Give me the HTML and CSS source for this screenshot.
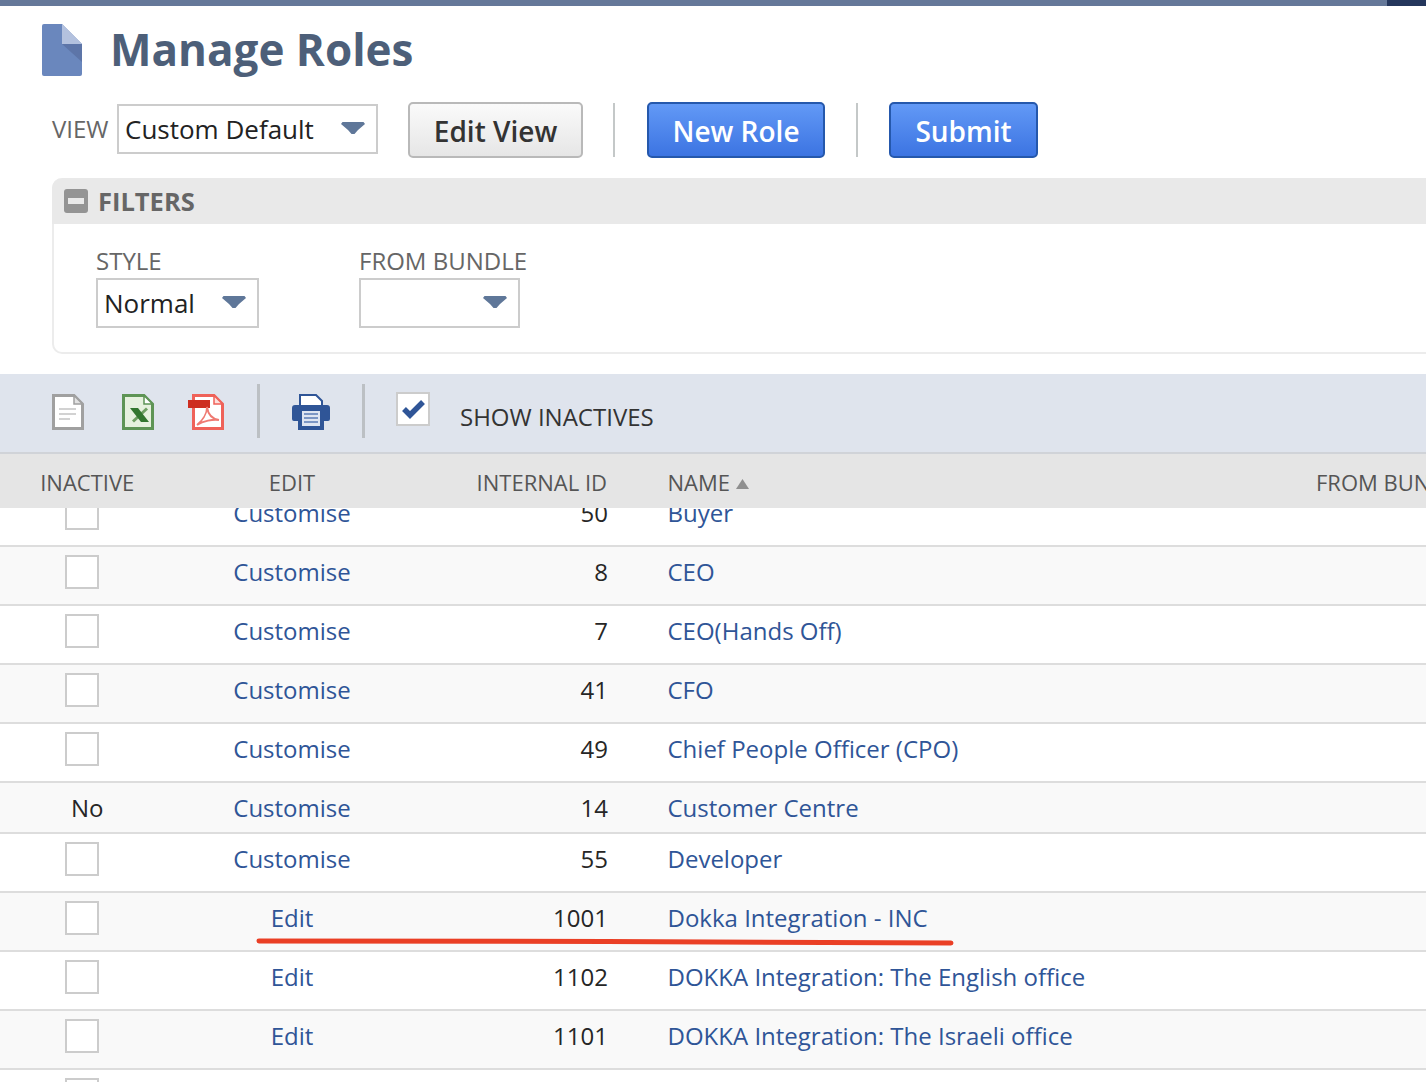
FILE: index.html
```html
<!DOCTYPE html>
<html lang="en">
<head>
<meta charset="utf-8">
<title>Manage Roles</title>
<link rel="stylesheet" href="styles.css">
</head>
<body>
<div class="topbar"><div class="topbar-end"></div></div>
<header class="title-row">
  <svg class="page-icon" width="40" height="52" viewBox="0 0 40 52"><path d="M2 0H20L40 20V50a2 2 0 0 1-2 2H2a2 2 0 0 1-2-2V2a2 2 0 0 1 2-2z" fill="#6a87bd"/><path d="M20 20H40V38z" fill="#5d75a8"/><path d="M20 0L40 20H20z" fill="#b3c1de"/></svg>
  <h1 class="page-title">Manage Roles</h1>
</header>
<div class="action-row">
  <span class="view-label">VIEW</span>
  <div class="select select-view"><span>Custom Default</span><svg class="caret" width="24" height="14" viewBox="0 0 24 14"><path d="M1.500 1H22.500L24 3 17 9 13.500 13H10.500L7 9 0 3z" fill="#5f7799"/></svg></div>
  <button class="btn btn-grey btn-edit">Edit View</button>
  <span class="divider divider-a"></span>
  <button class="btn btn-blue btn-role">New Role</button>
  <span class="divider divider-b"></span>
  <button class="btn btn-blue btn-submit">Submit</button>
</div>
<section class="filters">
  <div class="filters-head">
    <span class="collapse"><span class="collapse-bar"></span></span>
    <span class="filters-title">FILTERS</span>
  </div>
  <div class="filters-body">
    <div class="field field-style">
      <label class="field-label">STYLE</label>
      <div class="select select-style"><span>Normal</span><svg class="caret" width="24" height="14" viewBox="0 0 24 14"><path d="M1.500 1H22.500L24 3 17 9 13.500 13H10.500L7 9 0 3z" fill="#5f7799"/></svg></div>
    </div>
    <div class="field">
      <label class="field-label">FROM BUNDLE</label>
      <div class="select select-bundle"><span></span><svg class="caret" width="24" height="14" viewBox="0 0 24 14"><path d="M1.500 1H22.500L24 3 17 9 13.500 13H10.500L7 9 0 3z" fill="#5f7799"/></svg></div>
    </div>
  </div>
</section>
<div class="toolbar">
  <svg class="tool tool-doc" width="34" height="36" viewBox="0 0 34 36"><path d="M2.500 1.500H23L31.500 10V34.500H2.500z" fill="#fff" stroke="#a0a0a0" stroke-width="3"/><path d="M23 1.500V10H31.500z" fill="#e2e2e2" stroke="#a0a0a0" stroke-width="1.500"/><path d="M8 15H25M8 20H25M8 25H19" stroke="#d2d2d2" stroke-width="2"/></svg>
  <svg class="tool tool-xls" width="34" height="36" viewBox="0 0 34 36"><path d="M2.500 1.500H23L31.500 10V34.500H2.500z" fill="#e6f1de" stroke="#5e9455" stroke-width="3"/><path d="M23 1.500V10H31.500z" fill="#fff" stroke="#5e9455" stroke-width="1.500"/><path d="M26 14.500L12 27.500" stroke="#6f9f62" stroke-width="3"/><path d="M9 14H17L28 28H20z" fill="#33762f"/></svg>
  <svg class="tool tool-pdf" width="36" height="36" viewBox="0 0 36 36"><path d="M5.500 1.500H26L34.500 10V34.500H5.500z" fill="#fff" stroke="#ef6259" stroke-width="3"/><path d="M26 1.500V10H34.500z" fill="#fde0dd" stroke="#ef6259" stroke-width="1.500"/><rect x="0" y="6" width="22" height="8" fill="#cd2d20"/><path d="M9 31C14 27 19 20 19 13 20 20 24 25 31 26 25 25 15 27 9 31z" fill="none" stroke="#ef7a72" stroke-width="1.800"/></svg>
  <span class="tool-sep tool-sep-a"></span>
  <svg class="tool tool-print" width="38" height="36" viewBox="0 0 38 36"><path d="M8 1H24L30 7V14H8z" fill="#fff" stroke="#2f5597" stroke-width="2"/><path d="M3 11H35a3 3 0 0 1 3 3V25a2 2 0 0 1-2 2H32V36H6V27H2a2 2 0 0 1-2-2V14a3 3 0 0 1 3-3z" fill="#2f5597"/><rect x="10" y="17" width="18" height="15" fill="#dfe5f1"/><path d="M12 20H26M12 24H26M12 28H26" stroke="#7c96c4" stroke-width="2"/></svg>
  <span class="tool-sep tool-sep-b"></span>
  <span class="check check-on"><svg width="26" height="22" viewBox="0 0 26 22"><path d="M4 11L10 17 23 4" fill="none" stroke="#2f5597" stroke-width="5.500"/></svg></span>
  <span class="show-label">SHOW INACTIVES</span>
</div>
<div class="grid-row grid-head">
  <div class="c-center">INACTIVE</div>
  <div class="c-center">EDIT</div>
  <div class="c-right">INTERNAL ID</div>
  <div class="c-name">NAME<svg class="sort" width="13" height="10" viewBox="0 0 13 10"><path d="M6.500 0L13 10H0z" fill="#8f8f8f"/></svg></div>
  <div class="c-bundle">FROM BUNDLE</div>
</div>
<div class="grid-body">
  <div class="rows">
    <div class="grid-row row"><div class="c-center"><span class="check check-row"></span></div><div class="c-center"><a class="link">Customise</a></div><div class="c-right">50</div><div class="c-name"><a class="link">Buyer</a></div></div>
    <div class="grid-row row"><div class="c-center"><span class="check check-row"></span></div><div class="c-center"><a class="link">Customise</a></div><div class="c-right">8</div><div class="c-name"><a class="link">CEO</a></div></div>
    <div class="grid-row row"><div class="c-center"><span class="check check-row"></span></div><div class="c-center"><a class="link">Customise</a></div><div class="c-right">7</div><div class="c-name"><a class="link">CEO(Hands Off)</a></div></div>
    <div class="grid-row row"><div class="c-center"><span class="check check-row"></span></div><div class="c-center"><a class="link">Customise</a></div><div class="c-right">41</div><div class="c-name"><a class="link">CFO</a></div></div>
    <div class="grid-row row"><div class="c-center"><span class="check check-row"></span></div><div class="c-center"><a class="link">Customise</a></div><div class="c-right">49</div><div class="c-name"><a class="link">Chief People Officer (CPO)</a></div></div>
    <div class="grid-row row row-short"><div class="c-center">No</div><div class="c-center"><a class="link">Customise</a></div><div class="c-right">14</div><div class="c-name"><a class="link">Customer Centre</a></div></div>
    <div class="grid-row row"><div class="c-center"><span class="check check-row"></span></div><div class="c-center"><a class="link">Customise</a></div><div class="c-right">55</div><div class="c-name"><a class="link">Developer</a></div></div>
    <div class="grid-row row"><div class="c-center"><span class="check check-row"></span></div><div class="c-center"><a class="link">Edit</a></div><div class="c-right">1001</div><div class="c-name"><a class="link">Dokka Integration - INC</a></div></div>
    <div class="grid-row row"><div class="c-center"><span class="check check-row"></span></div><div class="c-center"><a class="link">Edit</a></div><div class="c-right">1102</div><div class="c-name"><a class="link">DOKKA Integration: The English office</a></div></div>
    <div class="grid-row row"><div class="c-center"><span class="check check-row"></span></div><div class="c-center"><a class="link">Edit</a></div><div class="c-right">1101</div><div class="c-name"><a class="link">DOKKA Integration: The Israeli office</a></div></div>
    <div class="grid-row row"><div class="c-center"><span class="check check-row"></span></div></div>
  </div>
</div>
<svg class="annotation" width="700" height="8" viewBox="0 0 700 8"><path d="M3 3L350 3.500 695 5" fill="none" stroke="#ea3f25" stroke-width="5" stroke-linecap="round"/></svg>
</body>
</html>
```

FILE: styles.css
```css
* { box-sizing: border-box; }
html, body { margin: 0; padding: 0; }
body {
  height: 1082px;
  overflow: hidden;
  position: relative;
  background: #fff;
  font-family: "Open Sans", "Liberation Sans", sans-serif;
  font-size: 24px;
  color: #262626;
}
.topbar { height: 6px; background: #657899; display: flex; justify-content: flex-end; }
.topbar-end { width: 39px; background: #24365c; }
.title-row { height: 72px; padding: 18px 0 0 42px; display: flex; align-items: flex-start; }
.page-icon { display: block; flex: none; }
.page-title { margin: -5px 0 0 28px; font-size: 44px; line-height: 60px; font-weight: 700; color: #4d5f79; }
.action-row { height: 56px; margin-top: 24px; padding-left: 52px; display: flex; align-items: center; }
.view-label { color: #666; font-size: 24px; width: 65px; flex: none; margin-bottom: 4px; }
.select {
  height: 50px; border: 2px solid #ccc; background: #fff; display: flex; align-items: center;
  justify-content: space-between; padding: 0 11px 0 6px; font-size: 26px; color: #222; flex: none;
}
.caret { display: block; margin-top: -2px; }
.select-view { width: 261px; margin-bottom: 2px; }
.btn {
  height: 56px; border-radius: 5px; font-family: inherit; font-size: 28px; font-weight: 600; padding: 1px 0 0; flex: none;
}
.btn-grey { border: 2px solid #b9b9b9; background: linear-gradient(#fafafa, #e6e6e6); color: #333; }
.btn-blue { border: 2px solid #2558ac; background: linear-gradient(#6299f6, #3c74e2); color: #fff; }
.btn-edit { width: 175px; margin-left: 30px; }
.btn-role { width: 178px; }
.btn-submit { width: 149px; }
.divider { width: 2px; height: 54px; background: #c4c8c8; flex: none; }
.divider-a { margin: 0 32px 0 30px; }
.divider-b { margin: 0 31px; }
.filters {
  margin: 20px 0 0 52px; height: 176px; border: 2px solid #ececec; border-top: 0; border-right: 0;
  border-radius: 10px 0 0 10px;
}
.filters-head { height: 46px; background: #e9e9e9; display: flex; align-items: center; padding-left: 12px; border-radius: 10px 0 0 0; margin-left: -2px; }
.collapse { width: 24px; height: 24px; border-radius: 3px; background: #949494; display: flex; align-items: center; justify-content: center; flex: none; }
.collapse-bar { width: 16px; height: 6px; background: #e9e9e9; }
.filters-title { margin-left: 10px; font-size: 25.500px; font-weight: 700; color: #666; }
.filters-body { display: flex; padding: 20px 0 0 42px; }
.field { display: flex; flex-direction: column; }
.field-style { width: 263px; }
.field-label { font-size: 24px; line-height: 34px; color: #666; height: 34px; }
.select-style { width: 163px; padding-right: 11px; }
.select-bundle { width: 161px; }
.toolbar { height: 80px; margin-top: 20px; background: #dfe4ed; border-bottom: 2px solid #d0d3d8; display: flex; align-items: flex-start; }
.tool { display: block; flex: none; margin-top: 20px; }
.tool-doc { margin-left: 51px; }
.tool-xls { margin-left: 36px; }
.tool-pdf { margin-left: 33px; }
.tool-print { margin-left: 32px; }
.tool-sep { width: 3px; height: 54px; background: #bcc0c4; flex: none; margin-top: 10px; }
.tool-sep-a { margin-left: 33px; }
.tool-sep-b { margin-left: 32px; }
.check { display: block; width: 34px; height: 34px; border: 2px solid #ccc; background: #fff; }
.check-on { margin: 18px 0 0 31px; flex: none; display: flex; align-items: center; justify-content: center; }
.check-row { margin-right: 10px; }
.show-label { margin: 26px 0 0 30px; font-size: 24px; line-height: 34px; color: #333; }
.grid-row { display: grid; grid-template-columns: 174.500px 235px 198.500px 59.500px 648.500px 110px; align-items: center; }
.grid-row > .c-center:nth-child(1) { grid-column: 1; }
.grid-row > .c-center:nth-child(2) { grid-column: 2; }
.c-center { display: flex; justify-content: center; }
.c-right { grid-column: 3; text-align: right; }
.c-name { grid-column: 5; white-space: nowrap; }
.c-bundle { grid-column: 6; white-space: nowrap; }
.grid-head { height: 54px; background: #e5e5e5; color: #555; font-size: 22px; padding-top: 1px; overflow: hidden; }
.grid-head .c-right { padding-right: 1px; }
.sort { margin: 0 0 2px 6px; }
.grid-body { height: 575px; overflow: hidden; }
.rows { margin-top: -20px; }
.row { height: 59px; border-bottom: 2px solid #ddd; background: #fff; padding-bottom: 8px; }
.row:nth-child(even) { background: #f9f9f9; }
.row-short { height: 51px; padding-bottom: 0; }
.link { color: #2f5597; }
.annotation { position: absolute; left: 256px; top: 938px; }
```
